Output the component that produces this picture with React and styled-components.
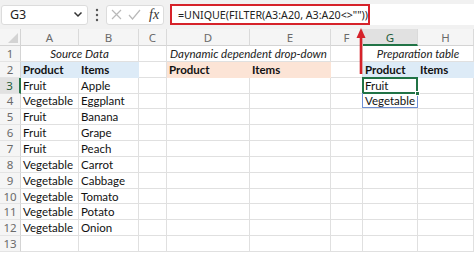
import React from 'react';
import styled, { createGlobalStyle, css } from 'styled-components';

const GlobalStyle = createGlobalStyle`
  html, body {
    margin: 0;
    padding: 0;
    background: #ffffff;
  }
  body {
    width: 474px;
    height: 253px;
    overflow: hidden;
    font-family: Lato, "Liberation Sans", sans-serif;
  }
`;

const GREEN = '#217346';
const GRID = '#e0e0e0';
const BLUE_FILL = '#ddebf7';
const PEACH_FILL = '#fce4d6';
const RED = '#d6222a';

const columns = ['A', 'B', 'C', 'D', 'E', 'F', 'G', 'H'];

const source = [
  ['Fruit', 'Apple'],
  ['Vegetable', 'Eggplant'],
  ['Fruit', 'Banana'],
  ['Fruit', 'Grape'],
  ['Fruit', 'Peach'],
  ['Vegetable', 'Carrot'],
  ['Vegetable', 'Cabbage'],
  ['Vegetable', 'Tomato'],
  ['Vegetable', 'Potato'],
  ['Vegetable', 'Onion'],
];

const Chevron = () => (
  <svg width="10" height="7" viewBox="0 0 10 7">
    <path d="M1.5 1.5 L5 5 L8.5 1.5" fill="none" stroke="#333" strokeWidth="1.5" />
  </svg>
);

const VDots = () => (
  <svg width="4" height="14" viewBox="0 0 4 14">
    <circle cx="2" cy="2" r="1.2" fill="#555" />
    <circle cx="2" cy="7" r="1.2" fill="#555" />
    <circle cx="2" cy="12" r="1.2" fill="#555" />
  </svg>
);

const Cross = () => (
  <svg width="11" height="11" viewBox="0 0 11 11">
    <path d="M1 1 L10 10 M10 1 L1 10" stroke="#b9b9b9" strokeWidth="1.2" fill="none" />
  </svg>
);

const Check = () => (
  <svg width="13" height="11" viewBox="0 0 13 11">
    <path d="M1 6 L4.5 10 L12 1" stroke="#b9b9b9" strokeWidth="1.2" fill="none" />
  </svg>
);

const Arrow = () => (
  <ArrowSvg width="12" height="46" viewBox="0 0 12 46">
    <polygon points="6,0 1.5,10 10.5,10" fill={RED} />
    <rect x="4.7" y="9" width="2.6" height="37" fill={RED} />
  </ArrowSvg>
);

export default function App() {
  return (
    <>
      <GlobalStyle />
      <Window>
        <FormulaBar>
          <NameBox>
            <span>G3</span>
            <Chevron />
          </NameBox>
          <Dots>
            <VDots />
          </Dots>
          <FxBox>
            <Cross />
            <Check />
            <Fx>fx</Fx>
          </FxBox>
          <FormulaInput>
            <FormulaText>=UNIQUE(FILTER(A3:A20, A3:A20&lt;&gt;""))</FormulaText>
          </FormulaInput>
        </FormulaBar>

        <Sheet>
          <Corner>
            <svg width="10" height="10" viewBox="0 0 10 10">
              <polygon points="10,0 10,10 0,10" fill="#d3d3d3" />
            </svg>
          </Corner>
          {columns.map((c) => (
            <ColHead key={c} $active={c === 'G'}>
              {c}
            </ColHead>
          ))}

          <RowHead>1</RowHead>
          <Cell $span={2} $title>Source Data</Cell>
          <Cell />
          <Cell $span={2} $title>Daynamic dependent drop-down</Cell>
          <Cell />
          <Cell $span={2} $title>Preparation table</Cell>

          <RowHead>2</RowHead>
          <Cell $fill={BLUE_FILL} $bold>Product</Cell>
          <Cell $fill={BLUE_FILL} $bold>Items</Cell>
          <Cell />
          <Cell $fill={PEACH_FILL} $bold>Product</Cell>
          <Cell $fill={PEACH_FILL} $bold>Items</Cell>
          <Cell />
          <Cell $fill={BLUE_FILL} $bold>Product</Cell>
          <Cell $fill={BLUE_FILL} $bold>Items</Cell>

          {source.map(([product, item], i) => {
            const row = i + 3;
            return (
              <React.Fragment key={row}>
                <RowHead $active={row === 3}>{row}</RowHead>
                <Cell>{product}</Cell>
                <Cell>{item}</Cell>
                <Cell />
                <Cell />
                <Cell />
                <Cell />
                {row === 3 && <Cell $selected>Fruit</Cell>}
                {row === 4 && <Cell $spill>Vegetable</Cell>}
                {row > 4 && <Cell />}
                <Cell />
              </React.Fragment>
            );
          })}

          <RowHead>13</RowHead>
          {columns.map((c) => (
            <Cell key={c} />
          ))}
        </Sheet>

        <Arrow />
      </Window>
    </>
  );
}

const Window = styled.div`
  position: relative;
  width: 474px;
  height: 253px;
  overflow: hidden;
  background: #ffffff;
`;

const FormulaBar = styled.div`
  display: flex;
  align-items: center;
  height: 29px;
  padding-left: 1px;
  background: #f1f1f1;
  font-family: "Noto Sans", "Open Sans", sans-serif;
  font-size: 12px;
  color: #222;
  box-sizing: border-box;
`;

const boxStyle = css`
  height: 20px;
  box-sizing: border-box;
  background: #ffffff;
  border: 1px solid #dcdcdc;
  border-radius: 3px;
`;

const NameBox = styled.div`
  ${boxStyle};
  width: 87px;
  display: flex;
  align-items: center;
  justify-content: space-between;
  padding: 0 4px 0 8px;
  font-size: 12.5px;
`;

const Dots = styled.div`
  width: 18px;
  display: flex;
  justify-content: center;
`;

const FxBox = styled.div`
  ${boxStyle};
  width: 58px;
  display: flex;
  align-items: center;
  gap: 6px;
  padding-left: 4px;
`;

const Fx = styled.span`
  font-family: "Liberation Serif", "DejaVu Serif", serif;
  font-style: italic;
  font-size: 14px;
  color: #333;
  margin-left: 2px;
`;

const FormulaInput = styled.div`
  flex: 1;
  height: 21px;
  margin-left: 6px;
  background: #ffffff;
  display: flex;
  align-items: center;
`;

const FormulaText = styled.div`
  width: 200px;
  height: 21px;
  box-sizing: border-box;
  border: 2px solid ${RED};
  padding-left: 6px;
  display: flex;
  align-items: center;
  white-space: nowrap;
  font-size: 10.7px;
  color: #222;
`;

const Sheet = styled.div`
  display: grid;
  grid-template-columns: 21px 58px 60px 28px 83px 81px 32px 55px 56px;
  grid-template-rows: 17px repeat(13, 15.85px);
  font-size: 11.5px;
  color: #111;
`;

const headBase = css`
  display: flex;
  align-items: center;
  justify-content: center;
  box-sizing: border-box;
  background: #f5f5f5;
  color: #6a6a6a;
  font-family: "Noto Sans", "Open Sans", sans-serif;
  font-size: 11.5px;
`;

const Corner = styled.div`
  ${headBase};
  align-items: flex-end;
  justify-content: flex-end;
  padding: 0 2px 2px 0;
  border-right: 1px solid #d4d4d4;
  border-bottom: 1px solid #d4d4d4;
`;

const ColHead = styled.div`
  ${headBase};
  padding-top: 1px;
  border-right: 1px solid #dadada;
  border-bottom: ${(p) => (p.$active ? `2px solid ${GREEN}` : '1px solid #d4d4d4')};
  ${(p) =>
    p.$active &&
    css`
      background: #e1e1e1;
      color: #1f5c3a;
    `}
`;

const RowHead = styled.div`
  ${headBase};
  border-bottom: 1px solid #e4e4e4;
  border-right: ${(p) => (p.$active ? `2px solid ${GREEN}` : '1px solid #d4d4d4')};
  ${(p) =>
    p.$active &&
    css`
      background: #e1e1e1;
      color: #1f5c3a;
    `}
`;

const Cell = styled.div`
  position: relative;
  display: flex;
  align-items: center;
  padding-left: 2px;
  box-sizing: border-box;
  white-space: nowrap;
  border-right: 1px solid ${(p) => p.$fill || GRID};
  border-bottom: 1px solid ${(p) => p.$fill || GRID};
  background: ${(p) => p.$fill || 'transparent'};
  grid-column: ${(p) => (p.$span ? `span ${p.$span}` : 'auto')};
  font-weight: ${(p) => (p.$bold ? 700 : 400)};
  ${(p) =>
    p.$title &&
    css`
      justify-content: center;
      font-style: italic;
      padding-left: 0;
      color: #222;
    `}
  ${(p) =>
    p.$selected &&
    css`
      &::after {
        content: '';
        position: absolute;
        inset: -1px -1px -1px -1px;
        border: 2px solid ${GREEN};
      }
      &::before {
        content: '';
        position: absolute;
        right: -3px;
        bottom: -3px;
        width: 5px;
        height: 5px;
        background: ${GREEN};
        border: 1px solid #fff;
        box-sizing: border-box;
        z-index: 2;
      }
    `}
  ${(p) =>
    p.$spill &&
    css`
      &::after {
        content: '';
        position: absolute;
        inset: -1px -1px 0 -1px;
        border: 1px solid #6f8fd3;
        border-top: none;
      }
    `}
`;

const ArrowSvg = styled.svg`
  position: absolute;
  left: 355px;
  top: 28px;
`;
